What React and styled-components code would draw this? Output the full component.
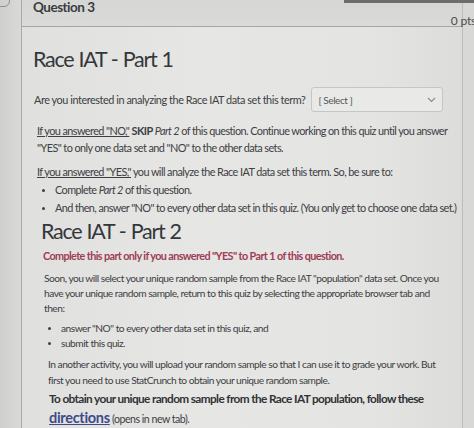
import React from "react";
import styled, { createGlobalStyle } from "styled-components";

const Global = createGlobalStyle`
  html, body { margin: 0; padding: 0; background: #d9d9d7; }
  body { font-family: Lato, "Open Sans", "Liberation Sans", sans-serif; color: #3a3d40; }
  * { box-sizing: border-box; }
`;

const Page = styled.div`
  display: flex;
  width: 474px;
  height: 428px;
  overflow: hidden;
  background: #d8d8d6;
`;

const Gutter = styled.div`
  width: 21px;
  flex: none;
  position: relative;
  background: linear-gradient(90deg, #cfcfcd, #d9d9d7);
`;

const FlagMark = styled.div`
  position: absolute;
  left: -6px;
  top: -5px;
  width: 16px;
  height: 12px;
  border: 1px solid #8f8f8f;
  border-radius: 0 8px 8px 0;
`;

const Card = styled.div`
  flex: 1;
  display: flex;
  flex-direction: column;
  border-left: 1px solid #a9a9a7;
  margin-right: 11px;
  border-right: 1px solid #bdbdbb;
`;

const Header = styled.div`
  height: 27px;
  display: flex;
  justify-content: space-between;
  align-items: flex-start;
  padding: 0 0 0 11px;
  background: linear-gradient(180deg, #d6d6d4, #dadad8);
  border-bottom: 1px solid #a6a6a4;
  position: relative;
`;

const TopBand = styled.div`
  position: absolute;
  right: -12px;
  top: 0;
  width: 130px;
  height: 3px;
  background: #6d6d6b;
`;

const QTitle = styled.div`
  font-weight: 700;
  font-size: 13.5px;
  line-height: 14px;
  color: #3b3d40;
  letter-spacing: -0.5px;
`;

const Pts = styled.div`
  font-size: 12px;
  color: #4a4d50;
  margin-top: 13px;
  margin-right: -14px;
  letter-spacing: -0.2px;
  white-space: nowrap;
  z-index: 1;
`;

const Body = styled.div`
  padding: 20px 3px 0 11px;
  background: linear-gradient(90deg, #e0e0de 0%, #e6e6e4 40%, #e4e4e2 80%, #dcdcda 100%);
  flex: 1;
`;

const H2 = styled.h2`
  margin: ${(p) => p.$m || "0"};
  padding-left: ${(p) => p.$in || 0}px;
  font-weight: 400;
  font-size: 21.5px;
  line-height: 24px;
  color: #34373a;
  letter-spacing: -1.3px;
  word-spacing: 1px;
`;

const P = styled.p`
  margin: ${(p) => p.$m || "0"};
  padding-left: ${(p) => p.$in || 0}px;
  font-size: ${(p) => p.$fs || 10.9}px;
  line-height: ${(p) => p.$lh || 17}px;
  color: #3d4043;
  letter-spacing: ${(p) => p.$ls ?? -0.58}px;
`;

const Row = styled.div`
  display: flex;
  align-items: center;
  gap: 6px;
  margin: 16px 0 0 1px;
`;

const Select = styled.div`
  width: 132px;
  height: 25px;
  border: 1px solid #c6c6c4;
  border-radius: 3px;
  background: #e9e9e7;
  display: flex;
  align-items: center;
  justify-content: space-between;
  padding: 0 6px 0 6px;
  font-size: 10px;
  color: #55585b;
  letter-spacing: -0.4px;
`;

const U = styled.span`
  text-decoration: underline;
`;

const List = styled.ul`
  margin: ${(p) => p.$m || "0"};
  padding-left: ${(p) => p.$in || 22}px;
  font-size: ${(p) => p.$fs || 10.9}px;
  line-height: ${(p) => p.$lh || 18}px;
  color: #3d4043;
  letter-spacing: ${(p) => p.$ls ?? -0.6}px;
  li::marker { font-size: 9px; }
`;

const Warn = styled.p`
  margin: ${(p) => p.$m || "0"};
  padding-left: ${(p) => p.$in || 0}px;
  font-size: 10.8px;
  line-height: 14px;
  font-weight: 700;
  color: #9e3d55;
  letter-spacing: -0.6px;
`;

const Strong = styled.p`
  margin: ${(p) => p.$m || "0"};
  padding-left: ${(p) => p.$in || 0}px;
  font-size: 11.8px;
  font-weight: 700;
  line-height: 19px;
  color: #303336;
  letter-spacing: -0.62px;
`;

const Link = styled.a`
  font-size: 14.5px;
  font-weight: 700;
  color: #3f4a8a;
  text-decoration: underline;
  letter-spacing: -0.3px;
`;

const Small = styled.span`
  font-weight: 400;
  font-size: 10.6px;
  color: #3d4043;
  letter-spacing: -0.5px;
`;

export default function App() {
  return (
    <>
      <Global />
      <Page>
        <Gutter>
          <FlagMark />
        </Gutter>
        <Card>
          <Header>
            <QTitle>Question 3</QTitle>
            <Pts>0 pts</Pts>
            <TopBand />
          </Header>
          <Body>
            <H2>Race IAT - Part 1</H2>
            <Row>
              <P $ls={-0.45}>Are you interested in analyzing the Race IAT data set this term?</P>
              <Select>
                <span>[ Select ]</span>
                <svg width="9" height="6" viewBox="0 0 9 6">
                  <path d="M1 1l3.5 3.5L8 1" fill="none" stroke="#8a8a8a" strokeWidth="1.1" />
                </svg>
              </Select>
            </Row>
            <P $m="10px 0 0 0" $in={4}>
              <U>If you answered "NO,"</U> <b>SKIP</b> <i>Part 2</i> of this question. Continue working on this quiz until you answer "YES" to only one data set and "NO" to the other data sets.
            </P>
            <P $m="8px 0 0 0" $in={4} $lh={16}>
              <U>If you answered "YES,"</U> you will analyze the Race IAT data set this term. So, be sure to:
            </P>
            <List $m="1px 0 0 0" $in={22}>
              <li>Complete <i>Part 2</i> of this question.</li>
              <li>And then, answer "NO" to every other data set in this quiz. (You only get to choose one data set.)</li>
            </List>
            <H2 $m="2px 0 0 0" $in={8}>Race IAT - Part 2</H2>
            <Warn $m="6px 0 0 0" $in={10}>Complete this part only if you answered "YES" to Part 1 of this question.</Warn>
            <P $m="8px 8px 0 0" $in={11} $lh={15} $fs={10.2} $ls={-0.5}>
              Soon, you will select your unique random sample from the Race IAT "population" data set. Once you have your unique random sample, return to this quiz by selecting the appropriate browser tab and then:
            </P>
            <List $m="5px 0 0 0" $in={28} $lh={15} $fs={10.2} $ls={-0.5}>
              <li>answer "NO" to every other data set in this quiz, and</li>
              <li>submit this quiz.</li>
            </List>
            <P $m="5px 8px 0 0" $in={15} $lh={16} $fs={10.2} $ls={-0.5}>
              In another activity, you will upload your random sample so that I can use it to grade your work. But first you need to use StatCrunch to obtain your unique random sample.
            </P>
            <Strong $m="1px 0 0 0" $in={16}>
              To obtain your unique random sample from the Race IAT population, follow these <Link href="#">directions</Link> <Small>(opens in new tab).</Small>
            </Strong>
          </Body>
        </Card>
      </Page>
    </>
  );
}
